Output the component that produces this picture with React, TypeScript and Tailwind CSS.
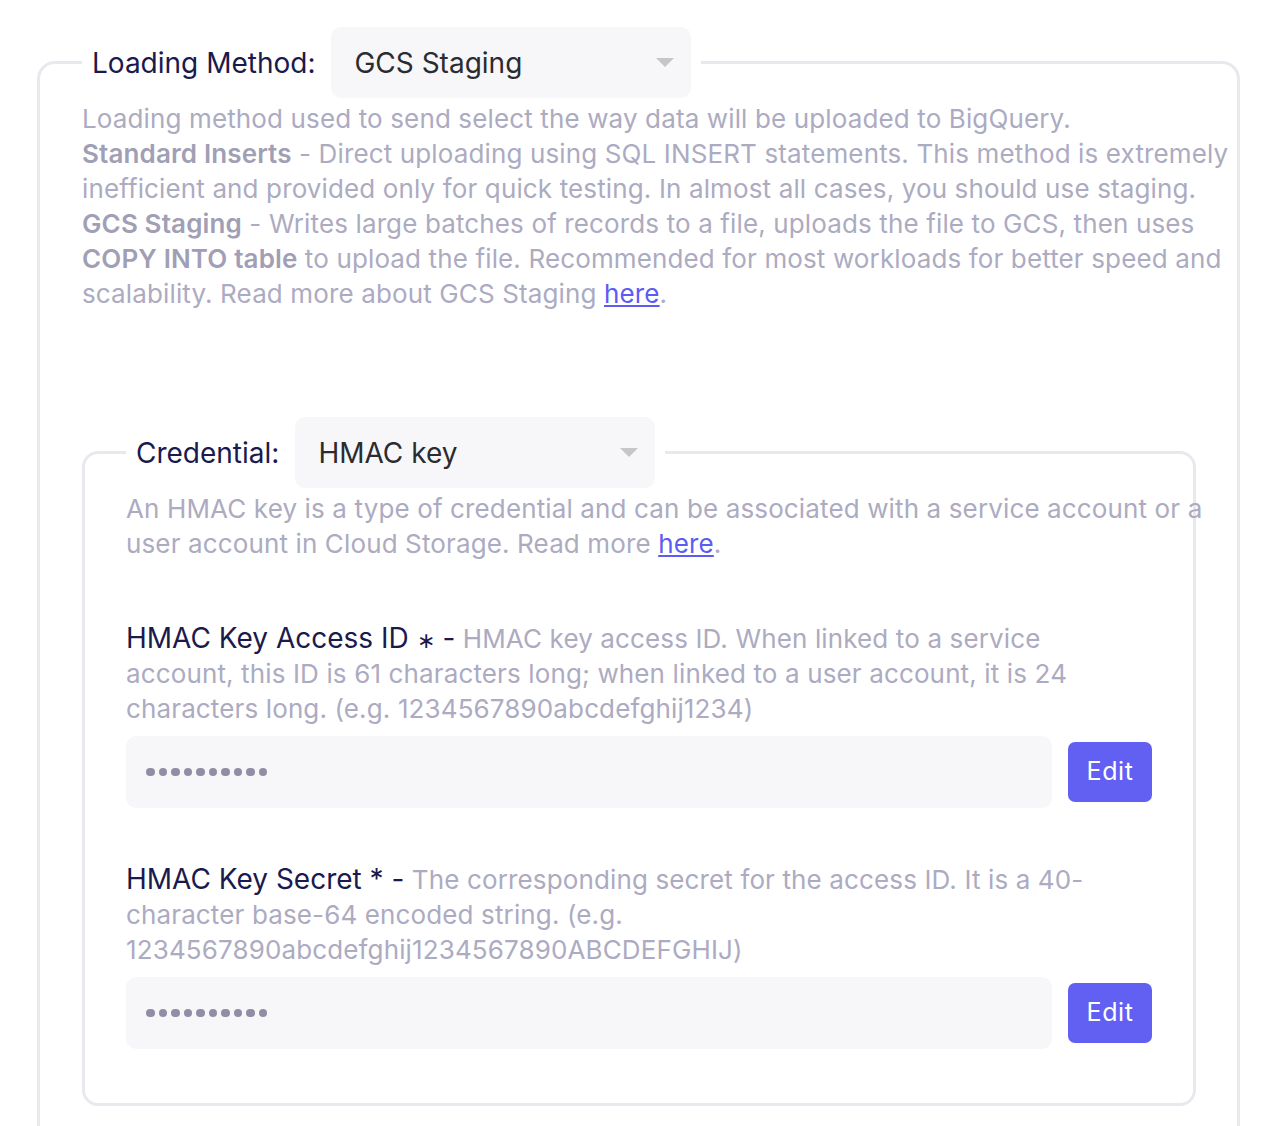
import React from 'react';

const Caret = () => (
  <svg width="18" height="10" viewBox="0 0 18 10" className="shrink-0">
    <path d="M0 0 L18 0 L9 9 Z" fill="#c6c6c9" />
  </svg>
);

const SelectBox = ({ value }: { value: string }) => (
  <div className="w-[360px] h-[71px] rounded-[10px] bg-[#f7f7f9] flex items-center justify-between pl-[23px] pr-[17px]">
    <span className="text-[28px] text-[#2b2b30]">{value}</span>
    <Caret />
  </div>
);

const Dots = () => (
  <div className="flex gap-[4px]">
    {Array.from({ length: 10 }).map((_, i) => (
      <span key={i} className="block w-[8.5px] h-[8.5px] rounded-full bg-[#8f8ea4]" />
    ))}
  </div>
);

const SecretField = ({
  label,
  star,
  children,
}: {
  label: string;
  star: React.ReactNode;
  children: React.ReactNode;
}) => (
  <div>
    <p className="max-w-[985px] text-[26px] leading-[35px] tracking-[0.13px] text-[#acabc1]">
      <span className="text-[28px] leading-none tracking-normal text-[#1b1a4d]">
        {label} {star} -
      </span>{' '}
      {children}
    </p>
    <div className="mt-[10px] flex items-center gap-[16px]">
      <div className="w-[927px] h-[72px] rounded-[10px] bg-[#f7f7f9] flex items-center pl-[20px]">
        <Dots />
      </div>
      <button className="w-[84px] h-[60px] rounded-[7px] bg-[#625ff3] text-white text-[25px] tracking-wide">
        Edit
      </button>
    </div>
  </div>
);

export default function App() {
  return (
    <div className="min-h-screen bg-white pt-[27px] pl-[37px] pr-[40px] font-['Inter',sans-serif] overflow-hidden">
      <fieldset className="border-[3px] border-[#e8e8ee] rounded-[18px] pl-[42px] pr-[41px] pb-[200px] min-w-0">
        <legend className="px-[10px]">
          <div className="flex items-center gap-[16px]">
            <span className="text-[28px] text-[#1b1a4d]">Loading Method:</span>
            <SelectBox value="GCS Staging" />
          </div>
        </legend>

        <p className="mt-[3px] mr-[-40px] text-[26px] leading-[35px] tracking-[0.13px] text-[#acabc1]">
          Loading method used to send select the way data will be uploaded to BigQuery.
          <br />
          <span className="font-semibold text-[#a09fb5]">Standard Inserts</span> - Direct uploading
          using SQL INSERT statements. This method is extremely inefficient and provided only for
          quick testing. In almost all cases, you should use staging.
          <br />
          <span className="font-semibold text-[#a09fb5]">GCS Staging</span> - Writes large batches of
          records to a file, uploads the file to GCS, then uses{' '}
          <span className="font-semibold text-[#a09fb5]">COPY INTO table</span> to upload the file.
          Recommended for most workloads for better speed and scalability. Read more about GCS
          Staging{' '}
          <a href="#" className="text-[#5c5bf3] underline">
            here
          </a>
          .
        </p>

        <fieldset className="mt-[106px] border-[3px] border-[#e8e8ee] rounded-[16px] pl-[41px] pr-[41px] pb-[54px] min-w-0">
          <legend className="px-[10px]">
            <div className="flex items-center gap-[16px]">
              <span className="text-[28px] text-[#1b1a4d]">Credential:</span>
              <SelectBox value="HMAC key" />
            </div>
          </legend>

          <p className="mt-[3px] mr-[-60px] text-[26px] leading-[35px] tracking-[0.13px] text-[#acabc1]">
            An HMAC key is a type of credential and can be associated with a service account or a
            user account in Cloud Storage. Read more{' '}
            <a href="#" className="text-[#5c5bf3] underline">
              here
            </a>
            .
          </p>

          <div className="mt-[60px]">
            <SecretField label="HMAC Key Access ID" star={<span className="text-[22px] leading-none">∗</span>}>
              HMAC key access ID. When linked to a service account, this ID is 61 characters long;
              when linked to a user account, it is 24 characters long. (e.g.
              1234567890abcdefghij1234)
            </SecretField>
          </div>

          <div className="mt-[54px]">
            <SecretField label="HMAC Key Secret" star="*">
              The corresponding secret for the access ID. It is a 40-character base-64 encoded
              string. (e.g. 1234567890abcdefghij1234567890ABCDEFGHIJ)
            </SecretField>
          </div>
        </fieldset>
      </fieldset>
    </div>
  );
}
